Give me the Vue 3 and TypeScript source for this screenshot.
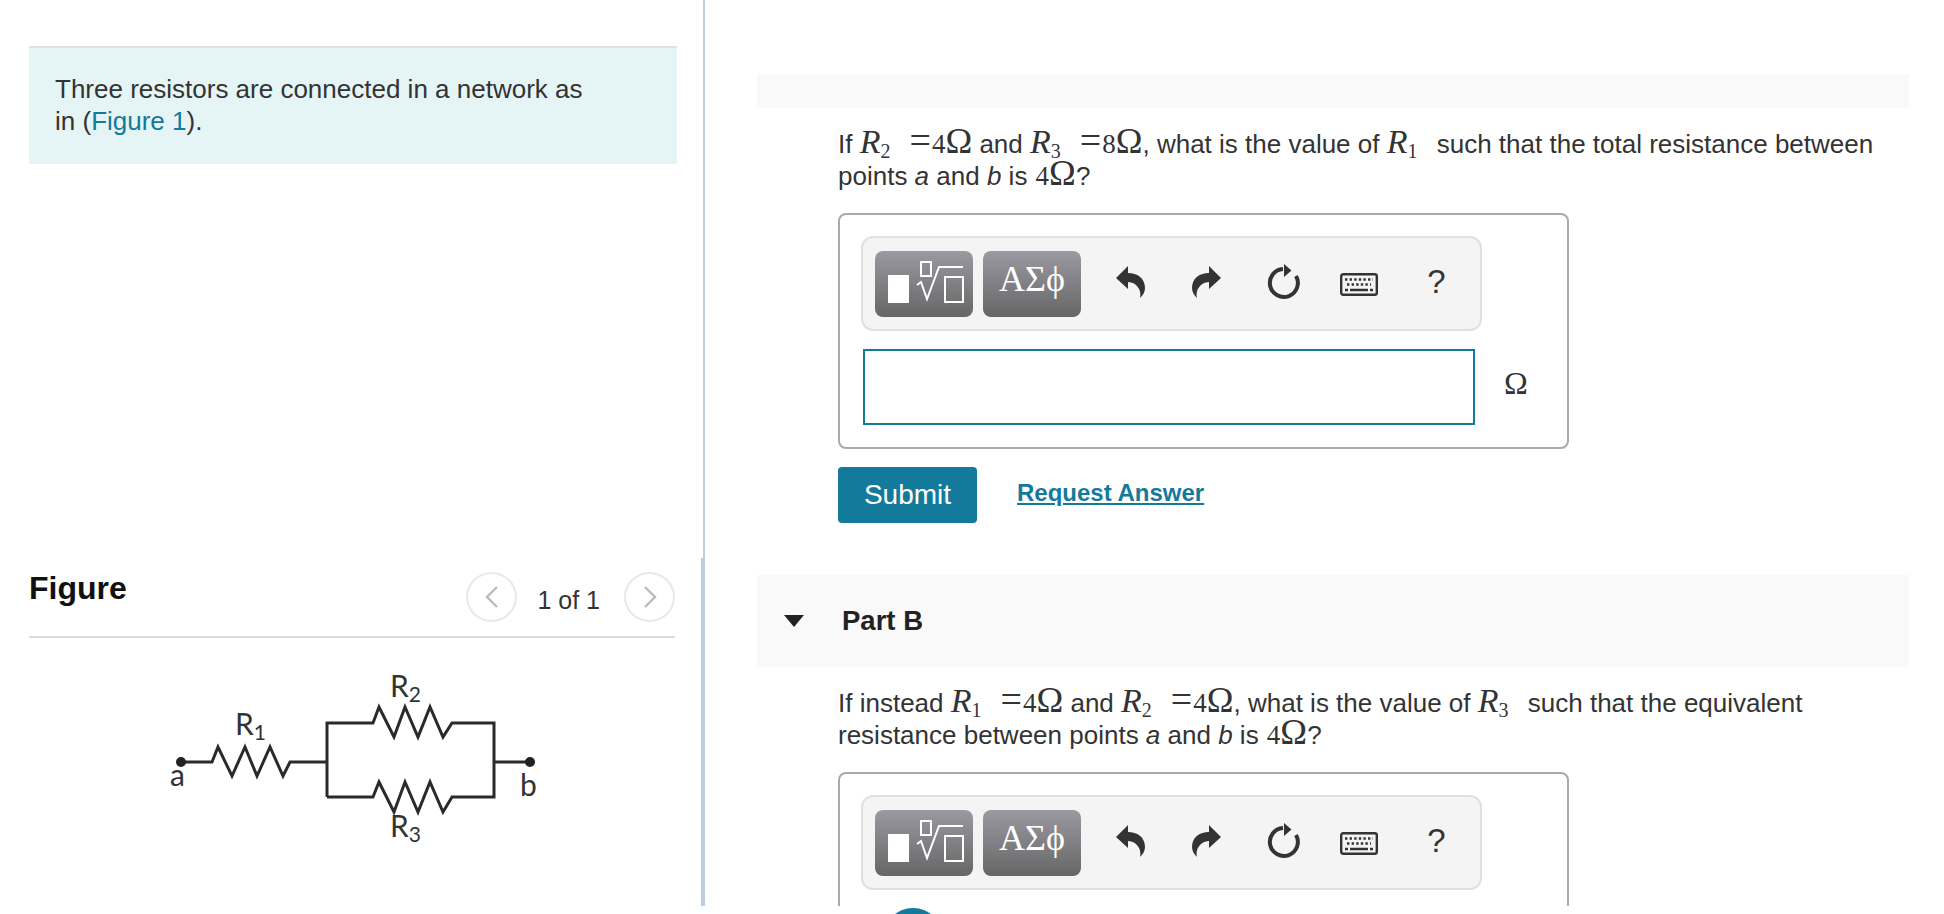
<script setup lang="ts">
interface Seg {
  kind: 'text' | 'em' | 'res' | 'val'
  value: string
  sub?: string
  eq?: boolean
  wide?: boolean
}

interface Part {
  title: string
  question: Seg[]
  answer: boolean
}

const text = (value: string): Seg => ({ kind: 'text', value })
const em = (value: string): Seg => ({ kind: 'em', value })
const res = (sub: string, wide = false): Seg => ({ kind: 'res', value: 'R', sub, wide })
const val = (value: string, eq = true): Seg => ({ kind: 'val', value, eq })

const parts: Part[] = [
  {
    title: '',
    answer: true,
    question: [
      text('If '), res('2'), val('4'), text(' and '), res('3'), val('8'),
      text(', what is the value of '), res('1', true),
      text(' such that the total resistance between points '), em('a'),
      text(' and '), em('b'), text(' is '), val('4', false), text('?'),
    ],
  },
  {
    title: 'Part B',
    answer: false,
    question: [
      text('If instead '), res('1'), val('4'), text(' and '), res('2'), val('4'),
      text(', what is the value of '), res('3', true),
      text(' such that the equivalent resistance between points '), em('a'),
      text(' and '), em('b'), text(' is '), val('4', false), text('?'),
    ],
  },
]

const zigzagTop = '223,63 229,47 244,77 255,47 268,77 280,47 293,77 302,63'
const zigzagBottom = '302,137 293,152 280,122 268,152 255,122 244,152 229,122 223,137'
</script>

<template>
  <div class="page">
    <div class="columns">
      <aside class="left">
        <section class="intro">
          <div class="note">
            <p>Three resistors are connected in a network as in (<a class="link">Figure 1</a>).</p>
          </div>
        </section>
        <section class="figure">
          <header class="figure-head">
            <h2>Figure</h2>
            <div class="pager">
              <span class="round">
                <svg width="18" height="24" viewBox="0 0 18 24"><path d="M14 2 4 12l10 10" /></svg>
              </span>
              <span class="count">1 of 1</span>
              <span class="round">
                <svg width="18" height="24" viewBox="0 0 18 24"><path d="m4 2 10 10L4 22" /></svg>
              </span>
            </div>
          </header>
          <svg class="circuit" width="400" height="190" viewBox="0 0 400 190">
            <g fill="none" stroke="#2a2a2a" stroke-width="3">
              <polyline points="31,102 62,102 68,87 82,116 95,87 107,116 120,87 133,116 140,102 177,102" />
              <polyline :points="`177,137 177,63 ${zigzagTop} 344,63 344,137 ${zigzagBottom} 177,137`" />
              <line x1="344" y1="102" x2="380" y2="102" />
            </g>
            <circle cx="31" cy="102" r="5" fill="#222" />
            <circle cx="380" cy="102" r="5" fill="#222" />
            <g class="labels">
              <text x="85" y="75">R<tspan class="small" dy="5">1</tspan></text>
              <text x="240" y="37">R<tspan class="small" dy="5">2</tspan></text>
              <text x="240" y="177">R<tspan class="small" dy="5">3</tspan></text>
              <text x="20" y="126">a</text>
              <text x="370" y="136">b</text>
            </g>
          </svg>
        </section>
      </aside>

      <main class="right">
        <section v-for="part in parts" :key="part.title" class="part">
          <div class="part-head" :class="{ empty: !part.title }">
            <template v-if="part.title">
              <span class="caret"></span>
              <h3>{{ part.title }}</h3>
            </template>
          </div>
          <div class="part-body">
            <p class="question">
              <template v-for="(seg, i) in part.question" :key="i">
                <span v-if="seg.kind === 'res'" class="math" :class="{ wide: seg.wide }">
                  <i class="r">{{ seg.value }}</i><span class="sub">{{ seg.sub }}</span>
                </span>
                <span v-else-if="seg.kind === 'val'" class="math">
                  <span v-if="seg.eq" class="eq">=</span><span class="num">{{ seg.value }}</span><span class="om">Ω</span>
                </span>
                <em v-else-if="seg.kind === 'em'">{{ seg.value }}</em>
                <template v-else>{{ seg.value }}</template>
              </template>
            </p>

            <div class="answer-box">
              <div class="toolbar">
                <button class="tpl">
                  <svg width="98" height="66" viewBox="0 0 98 66" fill="none" stroke="#fff" stroke-width="2">
                    <rect x="13" y="24" width="21" height="28" fill="#fff" stroke="none" />
                    <rect x="46" y="11" width="10" height="14" />
                    <path d="m42 34 4-3 6 17 12-32h24" />
                    <rect x="70" y="26" width="18" height="25" />
                  </svg>
                </button>
                <button class="tpl greek">ΑΣϕ</button>
                <span class="tool lifted">
                  <svg width="30" height="36" viewBox="0 0 30 36">
                    <path class="solid" d="M1 14 13 2v7c9 0 17 5 17 15 0 4-2 7-5 10 2-7-3-16-12-16v7z" />
                  </svg>
                </span>
                <span class="tool lifted">
                  <svg class="flip" width="30" height="36" viewBox="0 0 30 36">
                    <path class="solid" d="M1 14 13 2v7c9 0 17 5 17 15 0 4-2 7-5 10 2-7-3-16-12-16v7z" />
                  </svg>
                </span>
                <span class="tool lifted">
                  <svg width="36" height="36" viewBox="0 0 36 36">
                    <path d="M30 12A14 14 0 1 1 17 5" fill="none" stroke="#333" stroke-width="4" />
                    <path class="solid" d="m18 0 7.5 6.5L18 13z" />
                  </svg>
                </span>
                <span class="tool keys">
                  <svg width="38" height="23" viewBox="0 0 38 23" fill="none" stroke="#333">
                    <rect x="1.2" y="1.2" width="35.6" height="20.6" rx="2" stroke-width="2.4" />
                    <path d="M5 6.5h28M7 11.5h24" stroke-width="2.4" stroke-dasharray="2.4 2.2" />
                    <path d="M5 17h3M10 17h18M30 17h3" stroke-width="2.4" />
                  </svg>
                </span>
                <span class="tool help">?</span>
              </div>
              <div v-if="part.answer" class="entry">
                <div class="input"></div>
                <span class="unit">Ω</span>
              </div>
            </div>

            <div v-if="part.answer" class="actions">
              <button class="submit">Submit</button>
              <a class="link request">Request Answer</a>
            </div>
          </div>
        </section>
      </main>
    </div>
    <span class="fab"></span>
  </div>
</template>

<style scoped>
.page {
  position: relative;
  height: 914px;
  overflow: hidden;
  font-family: "Liberation Sans", Arial, sans-serif;
  font-size: 26px;
  line-height: 32px;
  color: #333;
  background: #fff;
}

.columns {
  display: flex;
  height: 906px;
  overflow: hidden;
}

.left {
  flex: 0 0 705px;
  display: flex;
  flex-direction: column;
}

.intro {
  box-sizing: border-box;
  height: 558px;
  padding: 46px 26px 0 29px;
  border-right: 2px solid #bccfe0;
}

.note {
  box-sizing: border-box;
  width: 648px;
  height: 118px;
  padding: 25px 26px 0;
  background: #e5f5f6;
  border-top: 2px solid #dde3e5;
}

.note p {
  margin: 0;
  max-width: 540px;
}

.link {
  color: #147a9c;
}

.figure {
  flex: 1;
  box-sizing: border-box;
  padding: 14px 0 0 29px;
  border-right: 4px solid #bccfe0;
}

.figure-head {
  display: flex;
  justify-content: space-between;
  align-items: flex-start;
  width: 646px;
  height: 64px;
  border-bottom: 2px solid #ddd;
}

.figure-head h2 {
  margin: 0;
  font-size: 32px;
  line-height: 32px;
  font-weight: 700;
  color: #111;
}

.pager {
  display: flex;
  align-items: center;
  gap: 20px;
}

.round {
  box-sizing: border-box;
  display: flex;
  align-items: center;
  justify-content: center;
  width: 51px;
  height: 50px;
  border: 2px solid #e8e8e8;
  border-radius: 50%;
}

.round path {
  fill: none;
  stroke: #bbb;
  stroke-width: 2.4;
}

.count {
  font-size: 25px;
  padding-top: 6px;
  margin-right: 4px;
}

.circuit {
  display: block;
  margin: 22px 0 0 121px;
}

.labels text {
  font-family: Lato, "Liberation Sans", sans-serif;
  font-size: 30px;
  fill: #333;
}

.labels .small {
  font-size: 21px;
}

.right {
  flex: 1;
  padding: 74px 35px 0 52px;
}

.part-head {
  display: flex;
  align-items: center;
  height: 92px;
  background: #f9f9f9;
}

.part-head.empty {
  height: 34px;
}

.part-head h3 {
  margin: 0 0 0 38px;
  font-size: 27.5px;
  font-weight: 700;
  color: #222;
}

.caret {
  width: 0;
  height: 0;
  margin-left: 27px;
  border-left: 10.5px solid transparent;
  border-right: 10.5px solid transparent;
  border-top: 12px solid #222;
}

.part-body {
  padding: 20px 0 0 81px;
}

.question {
  margin: 0;
  width: 1045px;
}

.math {
  font-family: "Liberation Serif", "DejaVu Serif", serif;
  line-height: 0;
}

.r {
  font-size: 34px;
}

.sub {
  font-size: 20px;
  position: relative;
  top: 5px;
  margin-right: 5px;
}

.wide .sub {
  margin-right: 12px;
}

.eq {
  font-size: 38px;
  margin-left: 14px;
}

.num {
  font-size: 27px;
  margin-left: 1px;
}

.om {
  font-size: 36px;
}

.answer-box {
  box-sizing: border-box;
  width: 731px;
  height: 236px;
  margin-top: 21px;
  padding: 21px;
  border: 2px solid #aaa;
  border-radius: 8px;
}

.toolbar {
  box-sizing: border-box;
  display: flex;
  align-items: center;
  gap: 10px;
  width: 621px;
  height: 95px;
  padding: 0 12px;
  background: #f4f4f4;
  border: 2px solid #e0e0e0;
  border-radius: 12px;
}

.tpl {
  display: block;
  width: 98px;
  height: 66px;
  padding: 0;
  border: 0;
  border-radius: 8px;
  color: #fff;
  background: linear-gradient(#9b99a1, #666);
}

.tpl svg {
  display: block;
}

.greek {
  font-family: "Liberation Serif", serif;
  font-size: 36px;
  padding-bottom: 10px;
}

.tool {
  display: flex;
  align-items: center;
  justify-content: center;
  flex: 0 0 77px;
  margin-right: -10px;
}

.lifted {
  padding-bottom: 4px;
}

.keys {
  padding: 2px 4px 0 0;
  box-sizing: border-box;
}

.solid {
  fill: #333;
}

.flip {
  transform: scaleX(-1);
}

.help {
  box-sizing: border-box;
  font-size: 33px;
  padding: 0 2px 3px 0;
}

.entry {
  display: flex;
  align-items: center;
  margin: 18px 0 0 2px;
}

.input {
  box-sizing: border-box;
  width: 612px;
  height: 76px;
  border: 2px solid #147a9c;
}

.unit {
  margin-left: 29px;
  font-family: "Liberation Serif", serif;
  font-size: 32px;
  padding-bottom: 9px;
}

.actions {
  display: flex;
  align-items: center;
  gap: 40px;
  margin: 18px 0 52px;
}

.submit {
  width: 139px;
  height: 56px;
  padding: 0;
  border: 0;
  border-radius: 4px;
  font-family: inherit;
  font-size: 28px;
  color: #fff;
  background: #147a9c;
}

.request {
  font-size: 24px;
  font-weight: 700;
  text-decoration: underline;
  padding-bottom: 5px;
}

.fab {
  position: absolute;
  left: 883px;
  top: 908px;
  width: 60px;
  height: 60px;
  border-radius: 50%;
  background: #147a9c;
}
</style>
